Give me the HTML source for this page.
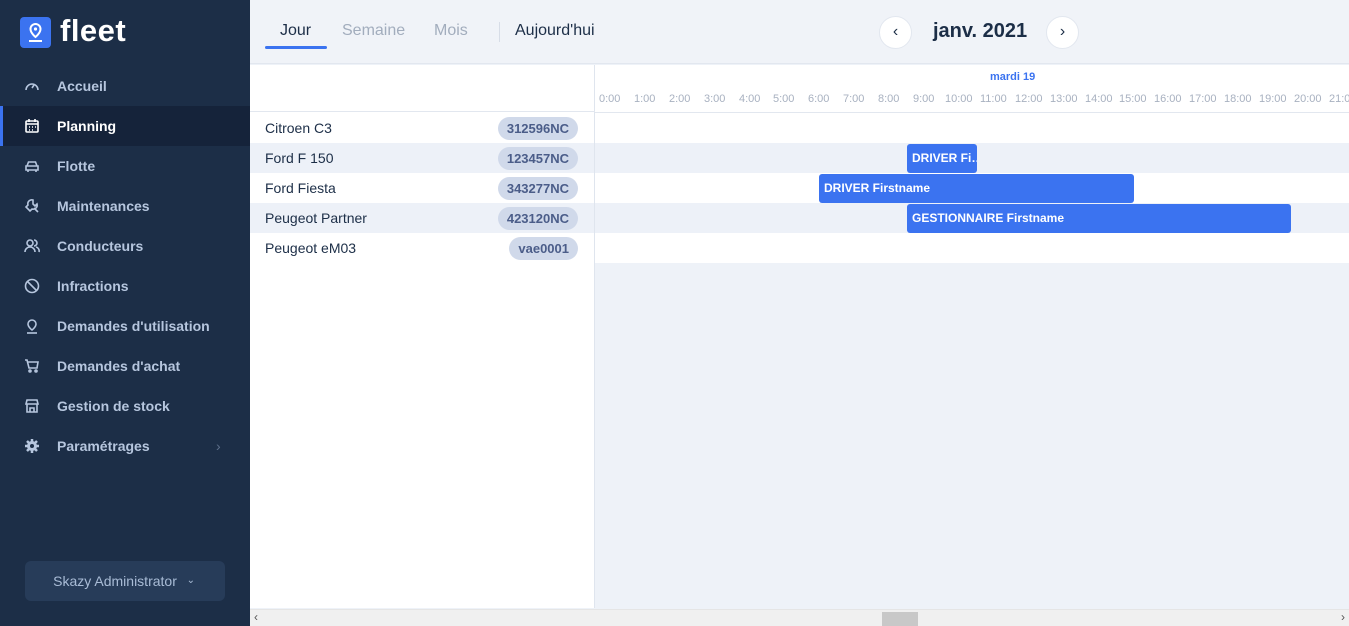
<!DOCTYPE html>
<html><head><meta charset="utf-8"><style>
*{box-sizing:border-box;margin:0;padding:0}
body{width:1349px;height:626px;overflow:hidden;font-family:"Liberation Sans",Roboto,sans-serif;background:#eef2f8;position:relative}
.sb{position:absolute;left:0;top:0;width:250px;height:626px;background:#1c2e47}
.logo{position:absolute;left:20px;top:17px;width:31px;height:31px;background:#3b73f0;border-radius:4px}
.brand{position:absolute;left:60px;top:13px;color:#fff;font-size:31px;font-weight:bold;letter-spacing:.5px}
.item{position:absolute;left:0;width:250px;height:40px;color:#b6c6de;font-size:14px;font-weight:bold;line-height:40px;padding-left:57px}
.item svg{position:absolute;left:24px;top:12px}
.item.act{background:#15233a;color:#fff;border-left:3px solid #3b73f0}
.user{position:absolute;left:25px;top:561px;width:200px;height:40px;background:#273c59;border-radius:6px;color:#a9bcd6;font-size:14px;line-height:40px;text-align:center;padding-right:20px}
.top{position:absolute;left:250px;top:0;width:1099px;height:64px;background:#f0f3f8;border-bottom:1px solid #e2e7ef}
.tab{position:absolute;top:22px;font-size:16px;color:#a2adbd}
.circ{position:absolute;top:16px;width:33px;height:33px;border-radius:50%;background:#fff;border:1px solid #e2e7ef;text-align:center;line-height:30px;font-size:16px;color:#1c2e47}
.left{position:absolute;left:250px;top:65px;width:345px;height:543px;background:#fff;border-right:1px solid #dfe5ee}
.tl{position:absolute;left:595px;top:65px;width:754px;height:48px;background:#fff;border-bottom:1px solid #e2e7ef}
.row{position:absolute;height:30px;width:1099px;left:250px}
.name{position:absolute;left:15px;top:7px;font-size:14px;color:#1c2e47}
.pl{position:absolute;right:771px;top:4px;height:23px;border-radius:12px;background:#d0d9ea;color:#4b5d89;font-size:13px;font-weight:bold;line-height:23px;padding:0 9px}
.hr{position:absolute;top:28px;font-size:11px;color:#a8b1c0}
.ev{position:absolute;height:29px;background:#3b73f0;border-radius:3px;color:#fff;font-size:12px;font-weight:bold;line-height:29px;padding-left:5px;white-space:nowrap;overflow:hidden}
.scroll{position:absolute;left:250px;top:609px;width:1099px;height:17px;background:#f0f0f0;border-top:1px solid #e5e5e5}
</style></head><body>
<div class="sb">
<div class="logo"><svg width="31" height="31" viewBox="0 0 31 31"><path d="M15.5 7a5 5 0 0 0-5 5c0 4 5 8 5 8s5-4 5-8a5 5 0 0 0-5-5z" fill="none" stroke="#fff" stroke-width="2"/><circle cx="15.5" cy="12" r="1.6" fill="#fff"/><path d="M9 24h13" stroke="#fff" stroke-width="2"/></svg></div>
<div class="brand">fleet</div>
<div class="item" style="top:66px"><svg width="16" height="16" viewBox="0 0 16 16" fill="none" stroke="#b6c6de" stroke-width="1.6"><path d="M2 12a6 6 0 1 1 12 0"/><path d="M8 10l2-3"/></svg>Accueil</div>
<div class="item act" style="top:106px;padding-left:54px"><svg style="left:21px" width="16" height="16" viewBox="0 0 16 16" fill="none" stroke="#fff" stroke-width="1.6"><rect x="2" y="3" width="12" height="11" rx="1"/><path d="M2 6h12M5 1v3M11 1v3M5 9h1M8 9h1M11 9h1M5 12h1M8 12h1"/></svg>Planning</div>
<div class="item" style="top:146px"><svg width="16" height="16" viewBox="0 0 16 16" fill="none" stroke="#b6c6de" stroke-width="1.6"><path d="M3 8l1.5-4h7L13 8M2 8h12v4H2zM4 12v2M12 12v2"/></svg>Flotte</div>
<div class="item" style="top:186px"><svg width="16" height="16" viewBox="0 0 16 16" fill="none" stroke="#b6c6de" stroke-width="1.6"><path d="M9 2a4 4 0 0 0-5 5l-2 2 4 4 2-2a4 4 0 0 0 5-5l-2 2-2-2z M10 10l4 4"/></svg>Maintenances</div>
<div class="item" style="top:226px"><svg width="16" height="16" viewBox="0 0 16 16" fill="none" stroke="#b6c6de" stroke-width="1.6"><circle cx="6" cy="5" r="3"/><path d="M1 14a5 5 0 0 1 10 0M10 2a3 3 0 0 1 0 6M12 9a4 4 0 0 1 3 5"/></svg>Conducteurs</div>
<div class="item" style="top:266px"><svg width="16" height="16" viewBox="0 0 16 16" fill="none" stroke="#b6c6de" stroke-width="1.6"><circle cx="8" cy="8" r="6.5"/><path d="M3.5 3.5l9 9"/></svg>Infractions</div>
<div class="item" style="top:306px"><svg width="16" height="16" viewBox="0 0 16 16" fill="none" stroke="#b6c6de" stroke-width="1.6"><path d="M8 2a4 4 0 0 0-4 4c0 3 4 6 4 6s4-3 4-6a4 4 0 0 0-4-4z"/><path d="M3 15h10"/></svg>Demandes d'utilisation</div>
<div class="item" style="top:346px"><svg width="16" height="16" viewBox="0 0 16 16" fill="none" stroke="#b6c6de" stroke-width="1.6"><path d="M1 2h2l2 8h8l1-6H4"/><circle cx="6" cy="13" r="1"/><circle cx="12" cy="13" r="1"/></svg>Demandes d'achat</div>
<div class="item" style="top:386px"><svg width="16" height="16" viewBox="0 0 16 16" fill="none" stroke="#b6c6de" stroke-width="1.6"><path d="M2 6l1-4h10l1 4zM3 6v8h10V6M6 14v-4h4v4"/></svg>Gestion de stock</div>
<div class="item" style="top:426px"><svg width="16" height="16" viewBox="0 0 16 16"><circle cx="8" cy="8" r="5" fill="#b6c6de"/><circle cx="8" cy="8" r="2" fill="#1c2e47"/><path d="M8 1v14M1 8h14M3 3l10 10M13 3L3 13" stroke="#b6c6de" stroke-width="2.5"/><circle cx="8" cy="8" r="2" fill="#1c2e47"/></svg>Paramétrages<span style="position:absolute;left:216px;color:#5d6f8a;font-weight:normal">›</span></div>
<div class="user">Skazy Administrator <span style="position:absolute;right:30px;font-size:10px">⌄</span></div>
</div>
<div class="top">
<div class="tab" style="left:30px;color:#1c2e47">Jour</div>
<div style="position:absolute;left:15px;top:46px;width:62px;height:3px;background:#3b73f0;border-radius:2px"></div>
<div class="tab" style="left:92px">Semaine</div>
<div class="tab" style="left:184px">Mois</div>
<div style="position:absolute;left:249px;top:22px;width:1px;height:20px;background:#d7dde7"></div>
<div class="tab" style="left:265px;color:#1c2e47">Aujourd'hui</div>
<div class="circ" style="left:629px">‹</div>
<div style="position:absolute;left:683px;top:20px;font-size:20px;font-weight:bold;color:#1c2e47">janv. 2021</div>
<div class="circ" style="left:796px">›</div>
</div>
<div class="left"><div style="position:absolute;top:46px;left:0;width:345px;height:1px;background:#e2e7ef"></div></div>
<div class="tl">
<div style="position:absolute;left:395px;top:6px;font-size:11px;font-weight:bold;color:#3b73f0">mardi 19</div>
<div class="hr" style="left:4px">0:00</div><div class="hr" style="left:39px">1:00</div><div class="hr" style="left:74px">2:00</div><div class="hr" style="left:109px">3:00</div><div class="hr" style="left:144px">4:00</div><div class="hr" style="left:178px">5:00</div><div class="hr" style="left:213px">6:00</div><div class="hr" style="left:248px">7:00</div><div class="hr" style="left:283px">8:00</div><div class="hr" style="left:318px">9:00</div><div class="hr" style="left:350px">10:00</div><div class="hr" style="left:385px">11:00</div><div class="hr" style="left:420px">12:00</div><div class="hr" style="left:455px">13:00</div><div class="hr" style="left:490px">14:00</div><div class="hr" style="left:524px">15:00</div><div class="hr" style="left:559px">16:00</div><div class="hr" style="left:594px">17:00</div><div class="hr" style="left:629px">18:00</div><div class="hr" style="left:664px">19:00</div><div class="hr" style="left:699px">20:00</div><div class="hr" style="left:734px">21:00</div>
</div>
<div class="row" style="top:113px;background:#fff"><div class="name">Citroen C3</div><div class="pl">312596NC</div></div>
<div class="row" style="top:143px;background:#edf1f8"><div class="name">Ford F 150</div><div class="pl">123457NC</div></div>
<div class="row" style="top:173px;background:#fff"><div class="name">Ford Fiesta</div><div class="pl">343277NC</div></div>
<div class="row" style="top:203px;background:#edf1f8"><div class="name">Peugeot Partner</div><div class="pl">423120NC</div></div>
<div class="row" style="top:233px;background:#fff"><div class="name">Peugeot eM03</div><div class="pl">vae0001</div></div>
<div style="position:absolute;left:594px;top:113px;width:1px;height:495px;background:#dfe5ee"></div>
<div class="ev" style="left:907px;top:144px;width:70px">DRIVER Fi…</div>
<div class="ev" style="left:819px;top:174px;width:315px">DRIVER Firstname</div>
<div class="ev" style="left:907px;top:204px;width:384px">GESTIONNAIRE Firstname</div>
<div class="scroll"><span style="position:absolute;left:4px;top:0;font-size:12px;color:#555">‹</span><div style="position:absolute;left:632px;top:2px;width:36px;height:14px;background:#c8c8c8"></div><span style="position:absolute;right:4px;top:0;font-size:12px;color:#555">›</span></div>
</body></html>
